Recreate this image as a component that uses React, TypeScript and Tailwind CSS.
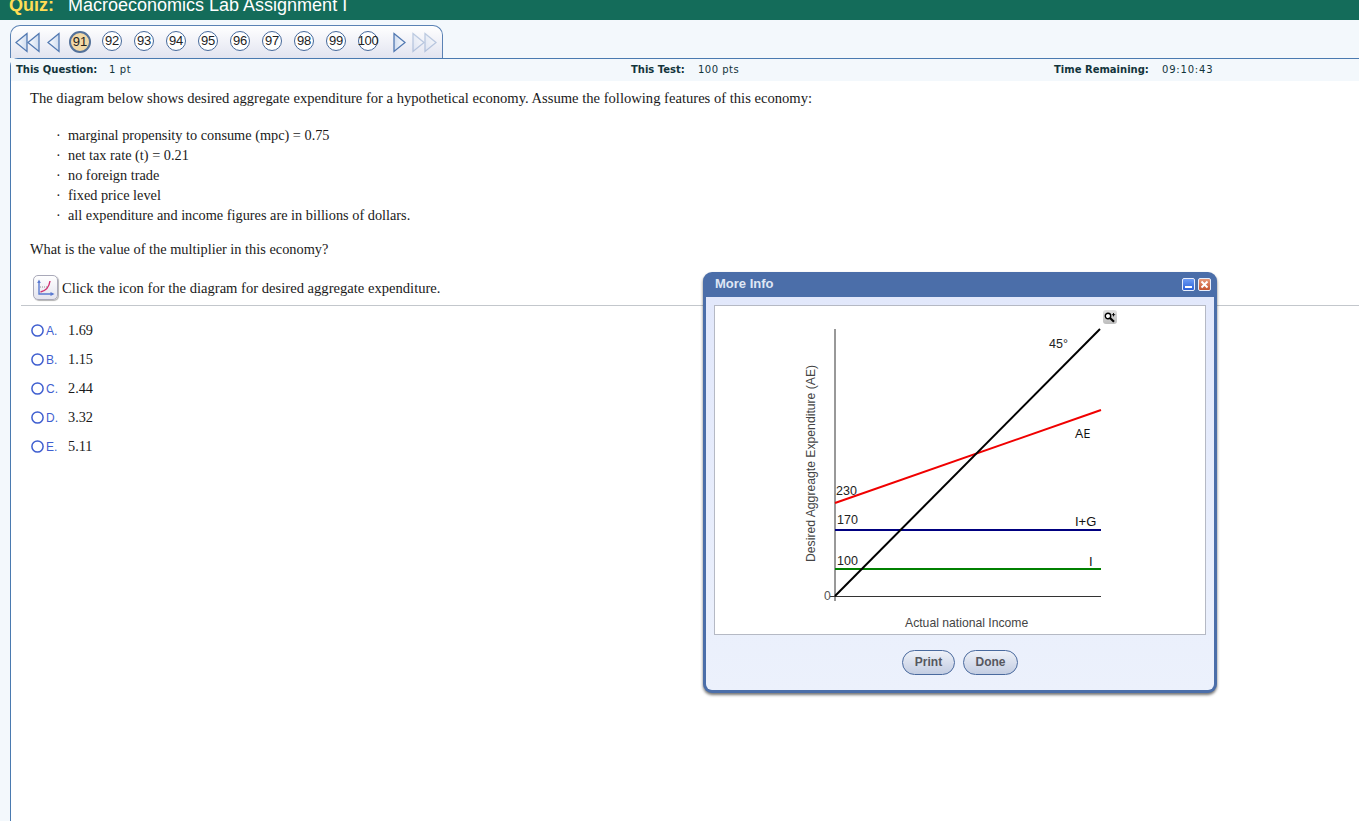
const serif = "font-['Liberation_Serif',serif]";

const answers = [
  ["A.", "1.69"],
  ["B.", "1.15"],
  ["C.", "2.44"],
  ["D.", "3.32"],
  ["E.", "5.11"],
];

const features = [
  "marginal propensity to consume (mpc) = 0.75",
  "net tax rate (t) = 0.21",
  "no foreign trade",
  "fixed price level",
  "all expenditure and income figures are in billions of dollars.",
];

const questions = [91, 92, 93, 94, 95, 96, 97, 98, 99, 100];

function Arrow({ dir, faded, double }: { dir: "l" | "r"; faded?: boolean; double?: boolean }) {
  const one = dir === "l" ? "M12 1.5 L1 10.5 L12 19.5 Z" : "M1 1.5 L12 10.5 L1 19.5 Z";
  const id = `arrow-${dir}-${double ? "d" : "s"}-${faded ? "f" : "n"}`;
  return (
    <svg width={double ? 25 : 13} height="21" viewBox={double ? "0 0 25 21" : "0 0 13 21"} className={faded ? "opacity-35" : ""}>
      <defs>
        <linearGradient id={id} x1="0" y1="0" x2="1" y2="0">
          <stop offset="0" stopColor={dir === "l" ? "#ffffff" : "#cfdcf0"} />
          <stop offset="1" stopColor={dir === "l" ? "#cfdcf0" : "#ffffff"} />
        </linearGradient>
      </defs>
      <path d={one} fill={`url(#${id})`} stroke="#5279b2" strokeWidth="1.3" />
      {double && <path d={one} transform="translate(12 0)" fill={`url(#${id})`} stroke="#5279b2" strokeWidth="1.3" />}
    </svg>
  );
}

function Chart() {
  return (
    <svg width="490" height="328" viewBox="715 306 490 328" className="block font-['Liberation_Sans',sans-serif]">
      <line x1="835" y1="329" x2="835" y2="601" stroke="#333" strokeWidth="1" />
      <line x1="830" y1="596.5" x2="1101" y2="596.5" stroke="#333" strokeWidth="1" />
      <line x1="835" y1="503" x2="1101" y2="410" stroke="#f00000" strokeWidth="2" />
      <line x1="835" y1="530" x2="1101" y2="530" stroke="#000080" strokeWidth="2" />
      <line x1="835" y1="569" x2="1101" y2="569" stroke="#008000" strokeWidth="2" />
      <line x1="835" y1="596" x2="1100" y2="329" stroke="#000" strokeWidth="2" />
      <g fontSize="12.5" fill="#222">
        <text x="1049" y="348">45°</text>
        <text x="836" y="495">230</text>
        <text x="837" y="524">170</text>
        <text x="837" y="565">100</text>
      </g>
      <g fontSize="13" fill="#111">
        <text x="1075" y="526">I+G</text>
        <text x="1089" y="566">I</text>
      </g>
      <g fontSize="12.2" fill="#444">
        <text x="824" y="600" fill="#555">0</text>
        <text x="905" y="627">Actual national Income</text>
        <text x="0" y="0" transform="translate(815 562) rotate(-90)">Desired Aggreagte Expenditure (AE)</text>
      </g>
      <text x="1075" y="438" fontSize="13" fill="#111" className="font-['Open_Sans',sans-serif]">AE</text>
    </svg>
  );
}

function MoreInfo() {
  return (
    <div className="absolute left-[703px] top-[272px] w-[514px] h-[421px] rounded-[9px] bg-[#4b6ea9] p-[3px] pt-0 shadow-[0_2px_3px_rgba(0,0,0,0.55)] flex flex-col font-['Liberation_Sans',sans-serif]">
      <div className="h-[25px] shrink-0 flex items-center justify-between pl-[9px] pr-[3px]">
        <span className="text-[13px] font-bold text-[#dfe6f4] pb-[2px]">More Info</span>
        <div className="flex gap-[3px]">
          <span className="w-[13px] h-[13px] rounded-[2px] border border-[#e8eefc] bg-gradient-to-b from-[#6d9cf5] to-[#2a5fd8] flex items-end justify-center pb-[2px]">
            <span className="w-[7px] h-[2px] bg-white" />
          </span>
          <span className="w-[13px] h-[13px] rounded-[2px] border border-[#e8eefc] bg-gradient-to-b from-[#e89a78] to-[#c4532e] flex items-center justify-center">
            <svg width="9" height="9" viewBox="0 0 9 9">
              <path d="M1.5 1.5 L7.5 7.5 M7.5 1.5 L1.5 7.5" stroke="#fff" strokeWidth="2" />
            </svg>
          </span>
        </div>
      </div>
      <div className="flex-1 rounded-b-[6px] bg-gradient-to-b from-[#e2e8fb] to-[#ecf1fc] pt-[8px] px-[8px] flex flex-col">
        <div className="relative w-[492px] h-[330px] border border-[#b5b9c4] bg-white">
          <Chart />
          <span className="absolute left-[388px] top-[4px] w-[14px] h-[14px] rounded-[3px] bg-gradient-to-b from-[#e2e2e2] to-[#bdbdbd] flex items-center justify-center">
            <svg width="12" height="11" viewBox="0 0 12 11">
              <circle cx="4" cy="4" r="2.7" fill="#fff" stroke="#000" strokeWidth="1.4" />
              <path d="M6 6 L10 9.7" stroke="#000" strokeWidth="2.2" />
              <path d="M9.5 1 V4.4 M7.8 2.7 H11.2" stroke="#000" strokeWidth="0.9" />
            </svg>
          </span>
        </div>
        <div className="flex justify-center gap-[8px] mt-[15px]">
          <button className="h-[25px] w-[53px] pb-[1px] rounded-full border border-[#4a6a9e] bg-gradient-to-b from-[#eef1f8] to-[#c3cde2] text-[12px] font-bold text-[#55575f]">
            Print
          </button>
          <button className="h-[25px] w-[55px] pb-[1px] rounded-full border border-[#4a6a9e] bg-gradient-to-b from-[#eef1f8] to-[#c3cde2] text-[12px] font-bold text-[#55575f]">
            Done
          </button>
        </div>
      </div>
    </div>
  );
}

export default function App() {
  return (
    <div className="relative h-[821px] overflow-hidden bg-[#f3f8fc]">
      {/* Title bar, cut off by the top of the window */}
      <div className="h-5 bg-[#146c5a] pl-[9px] overflow-hidden font-['Liberation_Sans',sans-serif] text-[18px] leading-[10px] whitespace-nowrap">
        <span className="font-bold text-[#ffdd55] mr-[14px]">Quiz:</span>
        <span className="text-white">Macroeconomics Lab Assignment I</span>
      </div>

      <div className="pl-[10px] pt-[5px]">
        {/* Question navigator */}
        <div className="w-[433px] h-[33px] rounded-t-[10px] border border-b-0 border-[#5a82b4] bg-gradient-to-b from-white to-[#e2e4f0] flex items-center pl-[4px] font-['Liberation_Sans',sans-serif]">
          <Arrow dir="l" double />
          <span className="ml-[7px]"><Arrow dir="l" /></span>
          <div className="flex gap-[12px] ml-[10px]">
            {questions.map((q) => (
              <span
                key={q}
                className={
                  q === 91
                    ? "w-[22px] h-[22px] -mx-[1px] rounded-full border-2 border-[#54719a] bg-[#f2d8a6] flex items-center justify-center text-[13px] text-[#222]"
                    : "w-[20px] h-[20px] rounded-full border border-[#45689a] bg-white flex items-center justify-center text-[13px] text-[#222] tracking-tight"
                }
              >
                {q}
              </span>
            ))}
          </div>
          <span className="ml-[15px]"><Arrow dir="r" /></span>
          <span className="ml-[6px]"><Arrow dir="r" double faded /></span>
        </div>

        {/* Question panel */}
        <div className="h-[763px] rounded-tl-[8px] border-t border-l border-[#4a7ab0] bg-white">
          <div className="h-[22px] bg-[#f3f8fc] flex items-center pb-[1px] pl-[5px] font-['DejaVu_Sans',sans-serif] text-[10px] text-[#12343b]">
            <div className="w-[615px] flex">
              <span className="w-[93px] font-bold">This Question:</span>
              <span className="tracking-[0.6px]">1 pt</span>
            </div>
            <div className="w-[423px] flex">
              <span className="w-[67px] font-bold">This Test:</span>
              <span className="tracking-[0.5px]">100 pts</span>
            </div>
            <div className="flex">
              <span className="w-[108px] font-bold">Time Remaining:</span>
              <span className="tracking-[0.8px]">09:10:43</span>
            </div>
          </div>

          <div className={`${serif} leading-[20px] text-[#1a1a1a]`}>
            <p className="pl-[19px] pt-[7px] text-[14.6px]">
              The diagram below shows desired aggregate expenditure for a hypothetical economy. Assume the following features of this economy:
            </p>
            <ul className="pl-[45px] pt-[17px] text-[14.3px]">
              {features.map((f) => (
                <li key={f} className="flex">
                  <span className="w-[12px]">·</span>
                  <span>{f}</span>
                </li>
              ))}
            </ul>
            <p className="pl-[19px] pt-[14px] text-[14.35px]">What is the value of the multiplier in this economy?</p>
            <div className="pl-[22px] pt-[15px] flex items-center h-[41px] text-[14.6px]">
              <span className="w-[25px] h-[25px] rounded-[5px] border border-[#a9a9b9] bg-gradient-to-b from-white to-[#e4e4ee] shadow-[1px_1px_1px_rgba(0,0,0,0.3)] flex items-center justify-center">
                <svg width="19" height="19" viewBox="0 0 19 19">
                  <path d="M3 3 V16 H17" fill="none" stroke="#5a7ad0" strokeWidth="1.4" />
                  <path d="M1.2 5 L3 1.5 L4.8 5 Z M14.5 14 L18.5 16 L14.5 18 Z" fill="#5a7ad0" />
                  <path d="M4.5 14 C9 13 13 10 14 3" fill="none" stroke="#d03070" strokeWidth="1.4" />
                  <path d="M4 9 H11" stroke="#888" strokeWidth="0.9" strokeDasharray="1 1" />
                </svg>
              </span>
              <span className="ml-[4px] pt-[2px]">Click the icon for the diagram for desired aggregate expenditure.</span>
            </div>
            <div className="ml-[10px] mt-[5px] border-t border-[#c3c7cc]" />
            <div className="pt-[9px] pl-[20px] text-[14.3px]">
              {answers.map(([letter, value]) => (
                <div key={letter} className="flex items-center h-[29px]">
                  <svg width="13" height="13" viewBox="0 0 13 13" className="mt-[2px]">
                    <circle cx="6.5" cy="6.5" r="5.6" fill="#fff" stroke="#3f5fd0" strokeWidth="1.5" />
                  </svg>
                  <span className="w-[24px] pl-[2px] pt-[2px] font-['Liberation_Sans',sans-serif] text-[12px] text-[#3f5fd0]">{letter}</span>
                  <span>{value}</span>
                </div>
              ))}
            </div>
          </div>
        </div>
      </div>

      <MoreInfo />
    </div>
  );
}
